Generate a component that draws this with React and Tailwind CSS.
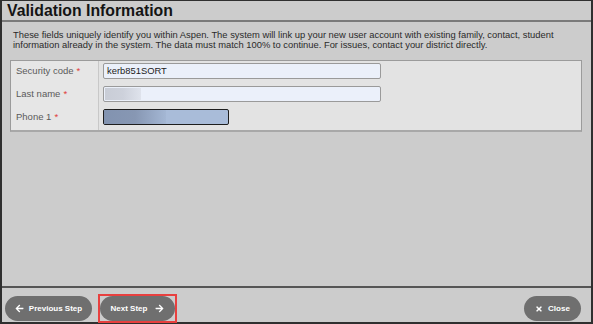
import React from 'react';
import { FaArrowLeft, FaArrowRight, FaTimes } from 'react-icons/fa';

const FIELDS = [
  { id: 'code', label: 'Security code', value: 'kerb851SORT' },
  { id: 'last', label: 'Last name', value: '' },
  { id: 'phone', label: 'Phone 1', value: '' },
];

const StepButton = ({ children, className = '' }) => (
  <button
    className={`h-[25px] rounded-full bg-[#6f6f6f] text-white text-[8px] font-bold flex items-center justify-center gap-[5px] ${className}`}
  >
    {children}
  </button>
);

const FieldInput = ({ field }) => {
  if (field.id === 'phone') {
    return (
      <div className="h-[16px] w-[126px] rounded-[2px] border border-[#1e1e1e] bg-[#a9bcd9] overflow-hidden">
        <div className="h-full w-[62px] bg-gradient-to-r from-[#8293b0] via-[#8797b3] to-[#a4b7d4]" />
      </div>
    );
  }
  return (
    <div className="h-[16px] w-[278px] rounded-[2px] border border-[#9a9a9a] bg-[#ebf0fa] flex items-center px-[3px] text-[9.4px] text-[#222] overflow-hidden">
      {field.value ? (
        field.value
      ) : (
        <div className="h-[12px] w-[36px] -ml-[2px] bg-gradient-to-r from-[#c9cdd6] via-[#cdd1db] to-[#dfe3ec]" />
      )}
    </div>
  );
};

const App = () => {
  return (
    <div
      className="w-[593px] h-[324px] bg-[#cccccc] border-t border-x-2 border-b-2 border-[#2f2f2f] flex flex-col"
      style={{ fontFamily: '"Liberation Sans", Arial, sans-serif' }}
    >
      {/* Title */}
      <div className="h-[21px] shrink-0 flex items-center pl-[5px] border-b-2 border-[#7a7a7a]">
        <h1 className="text-[15.8px] font-bold text-[#141414] leading-none">Validation Information</h1>
      </div>

      {/* Intro text */}
      <p className="mt-[8px] pl-[11px] text-[9.4px] leading-[9.5px] text-[#2a2a2a]">
        These fields uniquely identify you within Aspen. The system will link up your new user account with existing family, contact, student
        <br />
        information already in the system. The data must match 100% to continue. For issues, contact your district directly.
      </p>

      {/* Form box */}
      <div className="mt-[11px] ml-[8px] mr-[9px] border border-[#9b9b9b] border-b-2 border-b-[#a8a8a8] bg-[#e3e3e3]">
        {FIELDS.map(field => (
          <div key={field.id} className="flex h-[23px]">
            <div className="w-[88px] shrink-0 border-r border-[#c8c8c8] bg-[#e6e6e6] flex items-center pl-[5px] pb-[3px] text-[9.5px] text-[#5a5a5a]">
              {field.label}
              <span className="ml-[3px] text-[#e0403a]">*</span>
            </div>
            <div className="flex-1 pl-[4px] pt-[2px]">
              <FieldInput field={field} />
            </div>
          </div>
        ))}
      </div>

      <div className="flex-1" />

      {/* Footer buttons */}
      <div className="h-[36px] shrink-0 border-t-2 border-[#555555] flex items-start pt-[6px] pl-[3px] pr-[10px]">
        <StepButton className="w-[87px] mt-[2px]">
          <FaArrowLeft size={9} />
          Previous Step
        </StepButton>
        <div className="ml-[6px] border-2 border-[#e8403f]">
          <StepButton className="w-[75px]">
            Next Step
            <FaArrowRight size={9} className="ml-[3px]" />
          </StepButton>
        </div>
        <div className="flex-1" />
        <StepButton className="w-[57px] mt-[2px]">
          <FaTimes size={8} />
          Close
        </StepButton>
      </div>
    </div>
  );
};

export default App;
